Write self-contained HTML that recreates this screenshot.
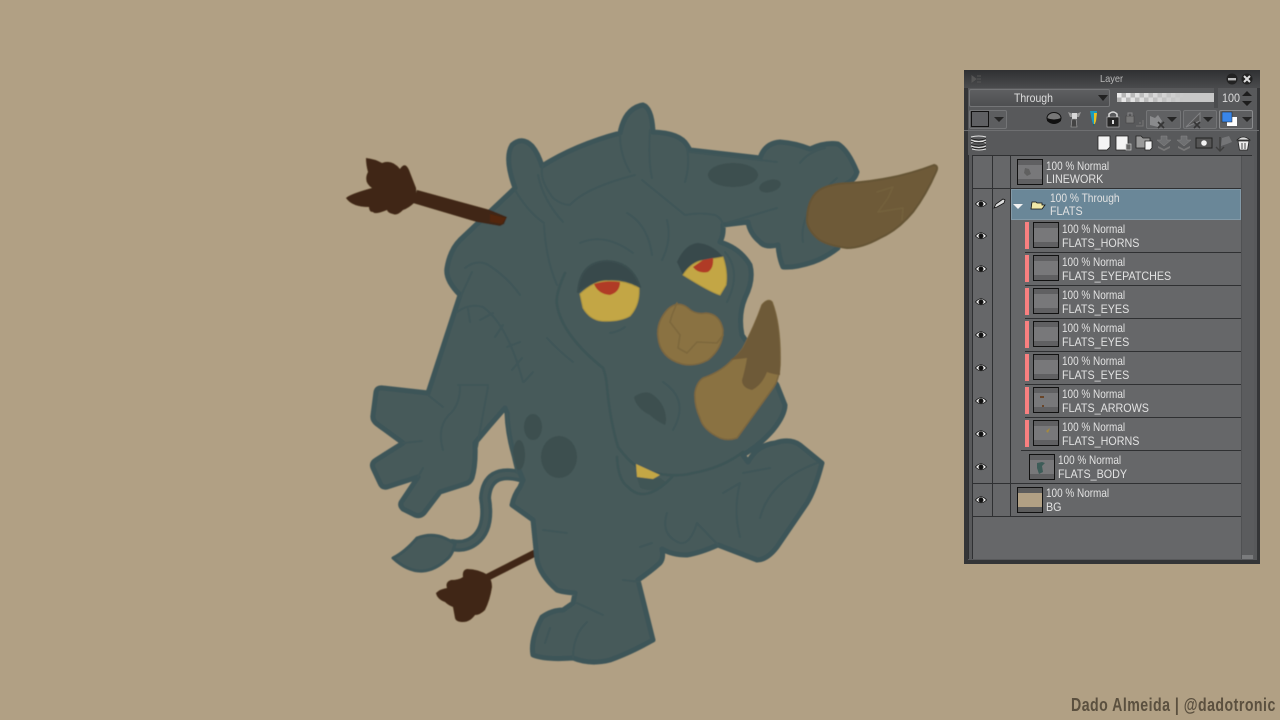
<!DOCTYPE html>
<html><head><meta charset="utf-8"><style>
html,body{margin:0;padding:0;width:1280px;height:720px;overflow:hidden;background:#b1a084}
body{position:relative;font-family:"Liberation Sans",sans-serif}
svg{position:absolute;left:0;top:0}
.a{position:absolute;box-sizing:border-box}
.t{position:absolute;white-space:nowrap;font-size:12px;line-height:14px;color:#e2e2e2;transform-origin:0 0}
.m{transform:scaleX(.83)}
.l{transform:scaleX(.895)}
.row{position:absolute;height:1px;background:#2f3032}
.red{position:absolute;left:1025px;width:4px;height:27px;background:#f98080}
.th{position:absolute;width:26px;height:26px;border:1px solid #111;background:linear-gradient(#606062 0 5px,#78787a 5px 19px,#606062 19px);box-sizing:border-box}
</style></head><body>

<svg width="1280" height="720" viewBox="0 0 1280 720">
<defs><filter id="s" x="-5%" y="-5%" width="110%" height="110%"><feGaussianBlur stdDeviation=".6"/></filter></defs>
<g filter="url(#s)" stroke-linejoin="round" stroke-linecap="round">
<!-- bottom arrow -->
<path d="M537 552L488 577" stroke="#3f2813" stroke-width="7" fill="none"/>
<path d="M436 593Q440 589 447 588Q445 582 451 580Q459 580 463 577Q462 570 467 569Q478 569 488 575Q492 580 492 587Q490 600 485 610Q480 615 475 615Q470 622 463 622Q456 622 455 618L453 607Q448 605 445 602Q437 599 436 593Z" fill="#3f2813"/>
<!-- tail -->
<path d="M520 476Q487 468 485 498Q490 528 475 540Q465 548 452 545" fill="none" stroke="#3c5558" stroke-width="12"/>
<path d="M520 476Q487 468 485 498Q490 528 475 540Q465 548 452 545" fill="none" stroke="#465a5a" stroke-width="5"/>
<path d="M393 558Q405 552 417 538Q430 533 442 537Q450 540 455 544Q452 556 446 560Q435 570 423 571Q408 572 393 558Z" fill="#465a5a" stroke="#3c5558" stroke-width="3"/>
<!-- body -->
<path d="M515 188Q504 158 512 145Q522 136 532 146Q538 153 542 166Q575 145 620 133Q625 108 643 105Q652 108 653 132Q680 133 687 145L690 150L760 158Q765 143 780 142Q795 143 810 149Q825 142 838 144Q848 150 857 172Q855 180 846 184L838 248Q825 258 813 262Q795 268 783 267Q779 258 778 245Q765 248 760 242Q750 234 748 222L723 225Q724 235 720 242Q740 248 750 265Q754 280 745 298Q738 315 742 335L777 385L785 405Q785 415 773 430Q760 445 743 455L748 462Q757 445 775 443Q790 438 800 445L822 463Q815 490 807 503L777 547Q767 560 757 560L718 545Q700 553 687 555Q672 555 662 549Q664 558 660 563Q650 572 638 580L653 640Q630 653 610 660Q590 665 573 658Q545 660 533 655Q530 640 542 617Q552 610 563 610L573 603L575 593Q562 592 557 590Q540 575 537 560L533 520L512 505Q514 495 520 487L523 480Q508 445 507 413L505 408Q490 425 475 443Q476 465 472 478Q470 483 465 484L440 492L424 513Q420 517 415 515L403 509Q399 505 402 501L418 477L387 487Q382 488 380 483L373 468Q371 463 376 460L403 443L377 424Q372 420 373 415L376 392Q377 387 383 388L428 393L460 295Q445 280 447 268Q450 250 460 240Z" fill="#465a5a" stroke="#3c5558" stroke-width="5"/>
<!-- spots -->
<g fill="#3c4f4f">
<ellipse cx="533" cy="427" rx="9" ry="13"/>
<ellipse cx="559" cy="457" rx="18" ry="21"/>
<ellipse cx="519" cy="455" rx="6" ry="15"/>
<ellipse cx="733" cy="175" rx="25" ry="12"/>
<ellipse cx="770" cy="186" rx="11" ry="6" transform="rotate(-15 770 186)"/>
<path d="M634 397Q642 391 650 393Q662 400 665 412Q667 420 665 425Q655 420 650 415Q636 408 634 397Z"/>
<path d="M637 477Q650 480 660 478L667 483Q660 490 653 490Q643 490 640 487Z" fill="#405455"/>
</g>
<!-- inner lines -->
<g fill="none" stroke="#405658" stroke-width="2">
<path d="M543 165Q538 178 553 198Q562 205 570 205Q585 188 635 175"/>
<path d="M515 190Q528 212 544 223"/>
<path d="M538 175Q543 200 563 222"/>
<path d="M544 225Q546 260 557 285"/>
<path d="M565 273Q555 295 557 305Q562 335 603 368Q606 375 607 387Q610 420 618 447Q635 470 650 472Q675 478 693 473Q722 468 743 452" stroke-width="2.600" stroke="#3e5456"/>
<path d="M547 338Q560 352 573 362"/>
<path d="M620 135Q620 155 630 172"/>
<path d="M650 130Q648 160 652 178"/>
<path d="M642 180L685 215Q700 212 715 215Q722 218 723 226"/>
<path d="M687 148Q690 165 685 182"/>
<path d="M727 223L777 208"/>
<path d="M690 152L777 162"/>
<path d="M800 163Q808 152 825 148" />
<path d="M803 242Q798 212 837 178"/>
<path d="M580 243Q605 232 633 253"/>
<path d="M627 213Q648 225 652 255"/>
<path d="M667 220Q672 240 662 260"/>
<path d="M610 333Q618 332 625 327"/>
<path d="M725 252Q742 272 727 302"/>
<path d="M465 268Q478 258 490 266Q508 278 520 295"/>
<path d="M472 272L460 298"/>
<path d="M457 312Q470 303 483 307Q508 325 523 382"/>
<path d="M468 309L470 322M480 320L493 313M495 337L503 325M507 347L520 342M512 370L522 358M524 382L533 372"/>
<path d="M663 382Q690 400 673 430"/>
<path d="M458 385L488 385M488 387L477 447M460 387Q460 402 452 412Q436 425 443 450"/>
<path d="M428 395L443 407M403 443L422 441M418 477L423 468"/>
<path d="M617 457Q618 480 628 487Q645 505 672 477" stroke-width="2.600" stroke="#3e5456"/>
<path d="M507 413Q510 450 517 473"/>
<path d="M543 530L567 533"/>
<path d="M667 513Q660 535 680 543Q690 545 697 523L718 545"/>
<path d="M723 493L740 483Q733 510 740 537"/>
<path d="M743 473L770 468"/>
<path d="M760 518Q770 480 817 463"/>
<path d="M640 547L652 543M623 580L640 582"/>
<path d="M577 603L603 615"/>
<path d="M545 643L550 628M573 658Q573 635 587 622"/>
</g>
<!-- eyes -->
<path d="M578 292Q580 262 607 261Q632 262 640 287Q610 270 578 292Z" fill="#384a4b" stroke="#3a4e4f" stroke-width="2"/>
<path d="M580 294Q595 280 608 281Q625 280 639 288Q640 305 630 316Q620 322 602 321Q590 320 583 308Z" fill="#c3a644" stroke="#a99440" stroke-width="1"/>
<path d="M594 284Q606 280 620 282Q620 292 610 295Q598 294 594 284Z" fill="#b03a26"/>
<path d="M677 262Q685 244 698 243Q712 244 723 257L683 275Z" fill="#384a4b"/>
<path d="M683 275Q690 264 700 261L723 257Q728 272 726 285L720 295Q710 292 683 275Z" fill="#c3a644" stroke="#a99440" stroke-width="1"/>
<path d="M693 267L703 260L713 258Q714 268 708 272Q698 274 693 267Z" fill="#b03a26"/>
<!-- nose -->
<path d="M658 337Q656 322 668 309Q678 300 688 308Q695 315 706 313Q720 314 723 330Q723 348 708 360Q695 367 682 364Q660 358 658 337Z" fill="#8a7242" stroke="#7a6640" stroke-width="1.500"/>
<path d="M677 303L672 315L670 322L680 335L678 348L687 353L697 342L717 343L723 335" fill="none" stroke="#7d683e" stroke-width="1.600"/>
<!-- front horn -->
<path d="M695 392Q697 382 703 378Q720 372 730 362Q738 355 743 348Q755 325 762 305Q768 298 772 302Q781 325 780 365Q779 380 773 388L737 438Q728 441 720 438Q703 430 700 418Q694 405 695 392Z" fill="#8a7242" stroke="#7a6640" stroke-width="1.500"/>
<path d="M730 360Q738 355 743 348Q755 325 762 305Q768 298 772 302Q781 325 780 375Q772 374 767 372Q762 385 752 390Q742 388 742 380Q745 370 747 358Z" fill="#6e5a38"/>
<!-- rear horn -->
<path d="M807 218Q808 195 823 188Q835 183 850 183Q895 180 934 165Q939 166 936 172Q926 195 913 212Q898 230 880 238Q862 248 847 248Q825 245 817 238Q806 228 807 218Z" fill="#6e5a38" stroke="#655436" stroke-width="2"/>
<path d="M877 192L893 187L888 198L878 212L903 208L902 220" fill="none" stroke="#75623c" stroke-width="1.400"/>
<!-- tooth -->
<path d="M636 464L660 475L653 479L637 477Z" fill="#c3a644"/>
<!-- top arrow -->
<path d="M417 190L490 210L507 217L504 224L500 226L477 222L413 203Z" fill="#3f2813"/>
<path d="M490 214L506 218L502 224L490 222Z" fill="#52280f"/>
<path d="M346 198Q350 194 372 188Q363 182 368 172Q366 165 366 158Q375 159 382 163Q392 159 400 169Q405 161 409 170L416 188Q417 198 415 202Q409 208 403 210Q397 216 393 214Q388 213 387 210Q375 215 373 212Q369 212 369 207Q352 207 346 198Z" fill="#3f2813"/>
</g>
</svg>

<div class="t" style="left:1071px;top:694px;font-size:18px;line-height:22px;font-weight:bold;color:#5b503f;transform:scaleX(.786);letter-spacing:.6px">Dado Almeida | @dadotronic</div>

<!-- PANEL -->
<div class="a" style="left:964px;top:70px;width:296px;height:494px;background:#58595b;border:1px solid #2e2f31;border-bottom:4px solid #343537;border-right:3px solid #343537;border-left:4px solid #343537"></div>
<div class="a" style="left:964px;top:70px;width:296px;height:18px;background:linear-gradient(#2f3032,#4a4b4d)"></div>
<div class="t" style="left:1100px;top:73px;font-size:10.500px;color:#b8b8b8;line-height:13px;transform:scaleX(.88)">Layer</div>
<svg width="1280" height="720" viewBox="0 0 1280 720">
<path d="M972 76l4 3-4 3zM977 76h4M977 79h4M977 82h4" stroke="#555" fill="#555"/>
<circle cx="1232" cy="79" r="5.500" fill="#222"/><rect x="1228" y="78" width="8" height="2.400" fill="#bbb"/>
<circle cx="1247" cy="79" r="5.500" fill="#222"/><path d="M1244 76l6 6M1250 76l-6 6" stroke="#ddd" stroke-width="2"/>
</svg>
<!-- blend -->
<div class="a" style="left:969px;top:89px;width:141px;height:18px;background:linear-gradient(#5e5f61,#4e4f51);border:1px solid #747577;border-radius:2px"></div>
<div class="t" style="left:1014px;top:91px;color:#dedede;transform:scaleX(.87)">Through</div>
<svg width="1280" height="720" viewBox="0 0 1280 720"><path d="M1098 95h10l-5 6z" fill="#222"/></svg>
<div class="a" style="left:1117px;top:93px;width:97px;height:9px;background:#ccc;overflow:hidden">
<div class="a" style="left:0;top:0;width:97px;height:9px;background-image:repeating-conic-gradient(#b4b4b4 0 25%,#ececec 0 50%);background-size:9px 9px"></div>
<div class="a" style="left:0;top:0;width:97px;height:9px;background:linear-gradient(90deg,rgba(200,200,200,0),#c8c8c8 70%)"></div>
</div>
<div class="a" style="left:1214px;top:88px;width:4px;height:20px;background:#4b4c4e"></div>
<div class="t" style="left:1222px;top:91px;color:#ddd;transform:scaleX(.9)">100</div>
<svg width="1280" height="720" viewBox="0 0 1280 720"><path d="M1242 96l5-5 5 5zM1242 101l5 5 5-5z" fill="#1d1d1d"/></svg>
<!-- toolbar 1 -->
<div class="a" style="left:969px;top:110px;width:38px;height:19px;background:#5d5e60;border:1px solid #747577;border-radius:2px"></div>
<div class="a" style="left:971px;top:111px;width:18px;height:16px;background:#5f6063;border:1px solid #111"></div>
<div class="a" style="left:1146px;top:110px;width:35px;height:19px;background:#606163;border:1px solid #747577;border-radius:2px"></div>
<div class="a" style="left:1183px;top:110px;width:34px;height:19px;background:#606163;border:1px solid #747577;border-radius:2px"></div>
<div class="a" style="left:1219px;top:110px;width:34px;height:19px;background:#5d5e60;border:1px solid #8a8b8d;border-radius:2px"></div>
<div class="a" style="left:964px;top:130px;width:295px;height:1px;background:#6e6f71"></div>
<svg width="1280" height="720" viewBox="0 0 1280 720">
<path d="M994 117h10l-5 5zM1167 117h10l-5 5zM1203 117h10l-5 5zM1242 117h10l-5 5z" fill="#252525"/>
<ellipse cx="1054" cy="118" rx="7" ry="5.500" fill="#777" stroke="#111"/><path d="M1047 118q7 3 14 0v3q-7 5-14 0z" fill="#111"/>
<path d="M1068 112l5 2h3l5-2-2 5h-9z" fill="#999"/><rect x="1072" y="113" width="5" height="6" fill="#d8d8d8"/><path d="M1072 119h4l1 8h-6z" fill="#444" stroke="#aaa" stroke-width=".6"/>
<path d="M1090 111h7l-1 10-2 6-2-6z" fill="#1a9ac0"/><path d="M1094 113h3l-1 8-2 5z" fill="#e8c020"/><path d="M1093.500 124h1l-.5 3z" fill="#222"/>
<rect x="1107" y="117" width="12" height="10" fill="#262626" stroke="#bbb" stroke-width=".6"/><path d="M1109 117v-3q4-4 8 0v3" fill="none" stroke="#d8d8d8" stroke-width="1.500"/><rect x="1112" y="120" width="2" height="4" fill="#ddd"/>
<rect x="1126" y="116" width="8" height="7" fill="#777" stroke="#444" stroke-width=".6"/><path d="M1128 116v-3h4v3" fill="none" stroke="#888"/><path d="M1136 126h7v-6M1139 123h2" fill="none" stroke="#777"/>
<path d="M1150 125v-9l5 2 3-3 4 6-4 6z" fill="#8a8b8d"/><path d="M1158 122l6 6M1164 122l-6 6" stroke="#353535" stroke-width="1.600"/>
<path d="M1186 127l14-14v8z" fill="#555" stroke="#808183"/><path d="M1194 122l6 6M1200 122l-6 6" stroke="#353535" stroke-width="1.600"/>
<rect x="1227" y="117" width="10" height="9" fill="#fff"/><rect x="1222" y="112" width="10" height="10" fill="#3a86e8" stroke="#222" stroke-width=".5"/>
</svg>
<!-- toolbar 2 -->
<svg width="1280" height="720" viewBox="0 0 1280 720">
<g fill="none" stroke="#e2e2e2" stroke-width="1.100"><path d="M971 137q8-2 15 0"/><path d="M971 140q8 3 15 0"/><path d="M971 143q8-3 15 0"/><path d="M971 146q8 3 15 0"/><path d="M972 149q7 2 14 0"/></g>
<g stroke="#1c1c1c" stroke-width=".7" fill="none"><path d="M971 138.500q8 3 15 0M971 141.500q8 3 15 0M971 144.500q8 3 15 0M972 147.500q7 3 14 0"/></g>
<path d="M1098 136h12v11l-3 3h-9z" fill="#f4f4f4" stroke="#222" stroke-width=".8"/>
<path d="M1116 136h12v14h-12z" fill="#f4f4f4" stroke="#222" stroke-width=".8"/><rect x="1126" y="144" width="5" height="6" fill="#666" stroke="#ccc" stroke-width=".7"/>
<path d="M1136 136h5l2 2h7v10h-14z" fill="#9a9a9a" stroke="#222" stroke-width=".8"/><path d="M1145 141h7v7l-2 2h-5z" fill="#f4f4f4" stroke="#222" stroke-width=".8"/>
<path d="M1161 136h6v4h4l-7 6-7-6h4z" fill="#6f7072" stroke="#888" stroke-width=".5"/><path d="M1158 146l6 3 6-3v2l-6 3-6-3z" fill="#777"/>
<path d="M1181 136h6v4h4l-7 6-7-6h4z" fill="#6f7072" stroke="#888" stroke-width=".5"/><path d="M1178 146l6 3 6-3v2l-6 3-6-3z" fill="#777"/>
<rect x="1196" y="138" width="16" height="10" fill="#555" stroke="#222"/><circle cx="1204" cy="143" r="2.800" fill="#f4f4f4"/>
<path d="M1221 146l1-8 7-2 3 6-5 2z" fill="#747577"/><path d="M1220 137v14M1216 147l4 4 4-4" fill="none" stroke="#3e3e3e" stroke-width="1.400"/>
<path d="M1238 141h11l-1.500 9h-8z" fill="#ececec" stroke="#222" stroke-width=".8"/><path d="M1237 140q6-6 13 0z" fill="#ddd" stroke="#222" stroke-width=".8"/><path d="M1242 143v6M1245 143v6" stroke="#444"/>
</svg>

<!-- LIST -->
<div class="a" style="left:968px;top:155px;width:284px;height:404px;background:#666769;border-top:1px solid #2f3032"></div>
<div class="a" style="left:1241px;top:156px;width:13px;height:403px;background:#5b5c5e;border-left:1px solid #505153"></div>
<div class="a" style="left:1242px;top:555px;width:11px;height:4px;background:#7a7b7d"></div>
<div class="a" style="left:968px;top:155px;width:5px;height:404px;background:#58595b;border-right:1px solid #2f3032;border-left:1px solid #2f3032"></div>
<div class="a" style="left:992px;top:156px;width:1px;height:361px;background:#2f3032"></div>
<div class="a" style="left:1010px;top:156px;width:1px;height:361px;background:#2f3032"></div>

<div class="a" style="left:1011px;top:189px;width:230px;height:31px;background:#6a8798;border:1px solid #839aa8;border-top-color:#7e96a5"></div>

<div class="row" style="left:973px;top:188px;width:268px"></div>
<div class="row" style="left:1025px;top:252px;width:216px"></div>
<div class="row" style="left:1025px;top:285px;width:216px"></div>
<div class="row" style="left:1025px;top:318px;width:216px"></div>
<div class="row" style="left:1025px;top:351px;width:216px"></div>
<div class="row" style="left:1025px;top:384px;width:216px"></div>
<div class="row" style="left:1025px;top:417px;width:216px"></div>
<div class="row" style="left:1021px;top:450px;width:220px"></div>
<div class="row" style="left:973px;top:483px;width:268px"></div>
<div class="row" style="left:973px;top:516px;width:268px"></div>

<div class="red" style="top:222px"></div><div class="red" style="top:255px"></div><div class="red" style="top:288px"></div><div class="red" style="top:321px"></div><div class="red" style="top:354px"></div><div class="red" style="top:387px"></div><div class="red" style="top:420px"></div>

<div class="th" style="left:1017px;top:159px"></div>
<div class="th" style="left:1033px;top:222px"></div>
<div class="th" style="left:1033px;top:255px"></div>
<div class="th" style="left:1033px;top:288px"></div>
<div class="th" style="left:1033px;top:321px"></div>
<div class="th" style="left:1033px;top:354px"></div>
<div class="th" style="left:1033px;top:387px"></div>
<div class="th" style="left:1033px;top:420px"></div>
<div class="th" style="left:1029px;top:454px"></div>
<div class="th" style="left:1017px;top:487px;background:linear-gradient(#5c5c5c 0 5px,#b1a084 5px 19px,#5c5c5c 19px)"></div>

<svg width="1280" height="720" viewBox="0 0 1280 720">
<defs><g id="eye"><path d="M-5.500 0Q0-6.500 5.500 0Q0 5.500 -5.500 0Z" fill="#f0f0f0" stroke="#111" stroke-width=".8"/><circle r="2.500" fill="#111"/></g></defs>
<use href="#eye" x="981" y="204"/><use href="#eye" x="981" y="236"/><use href="#eye" x="981" y="269"/><use href="#eye" x="981" y="302"/><use href="#eye" x="981" y="335"/><use href="#eye" x="981" y="368"/><use href="#eye" x="981" y="401"/><use href="#eye" x="981" y="434"/><use href="#eye" x="981" y="467"/><use href="#eye" x="981" y="500"/>
<path d="M994 208l2-4 7-5 2 1-1 3-7 4z" fill="#ddd" stroke="#111" stroke-width=".8"/>
<path d="M1013 204h10l-5 5z" fill="#f2f2f2"/>
<path d="M1031 209l1-7h4l1 1h5v2h3l-3 4z" fill="#f0e9a8" stroke="#111" stroke-width=".8"/>
<path d="M1025 168l4 1 2 5-4 2-3-3z" fill="#555" opacity=".7"/>
<path d="M1037 463l5-1 3 1-3 3 1 6-4 2-2-6z" fill="#3d5c58"/>
<path d="M1040 396h4v2h-4zM1042 405h2v2h-2z" fill="#6a4528"/>
<path d="M1046 431l4-3-2 5z" fill="#a58a40"/>
</svg>

<div class="t m" style="left:1046px;top:159px">100 % Normal</div><div class="t l" style="left:1046px;top:172px">LINEWORK</div>
<div class="t m" style="left:1050px;top:191px;transform:scaleX(.85)">100 % Through</div><div class="t l" style="left:1050px;top:204px">FLATS</div>
<div class="t m" style="left:1062px;top:222px">100 % Normal</div><div class="t l" style="left:1062px;top:236px">FLATS_HORNS</div>
<div class="t m" style="left:1062px;top:255px">100 % Normal</div><div class="t l" style="left:1062px;top:269px">FLATS_EYEPATCHES</div>
<div class="t m" style="left:1062px;top:288px">100 % Normal</div><div class="t l" style="left:1062px;top:302px">FLATS_EYES</div>
<div class="t m" style="left:1062px;top:321px">100 % Normal</div><div class="t l" style="left:1062px;top:335px">FLATS_EYES</div>
<div class="t m" style="left:1062px;top:354px">100 % Normal</div><div class="t l" style="left:1062px;top:368px">FLATS_EYES</div>
<div class="t m" style="left:1062px;top:387px">100 % Normal</div><div class="t l" style="left:1062px;top:401px">FLATS_ARROWS</div>
<div class="t m" style="left:1062px;top:420px">100 % Normal</div><div class="t l" style="left:1062px;top:434px">FLATS_HORNS</div>
<div class="t m" style="left:1058px;top:453px">100 % Normal</div><div class="t l" style="left:1058px;top:467px">FLATS_BODY</div>
<div class="t m" style="left:1046px;top:486px">100 % Normal</div><div class="t l" style="left:1046px;top:500px">BG</div>
</body></html>
